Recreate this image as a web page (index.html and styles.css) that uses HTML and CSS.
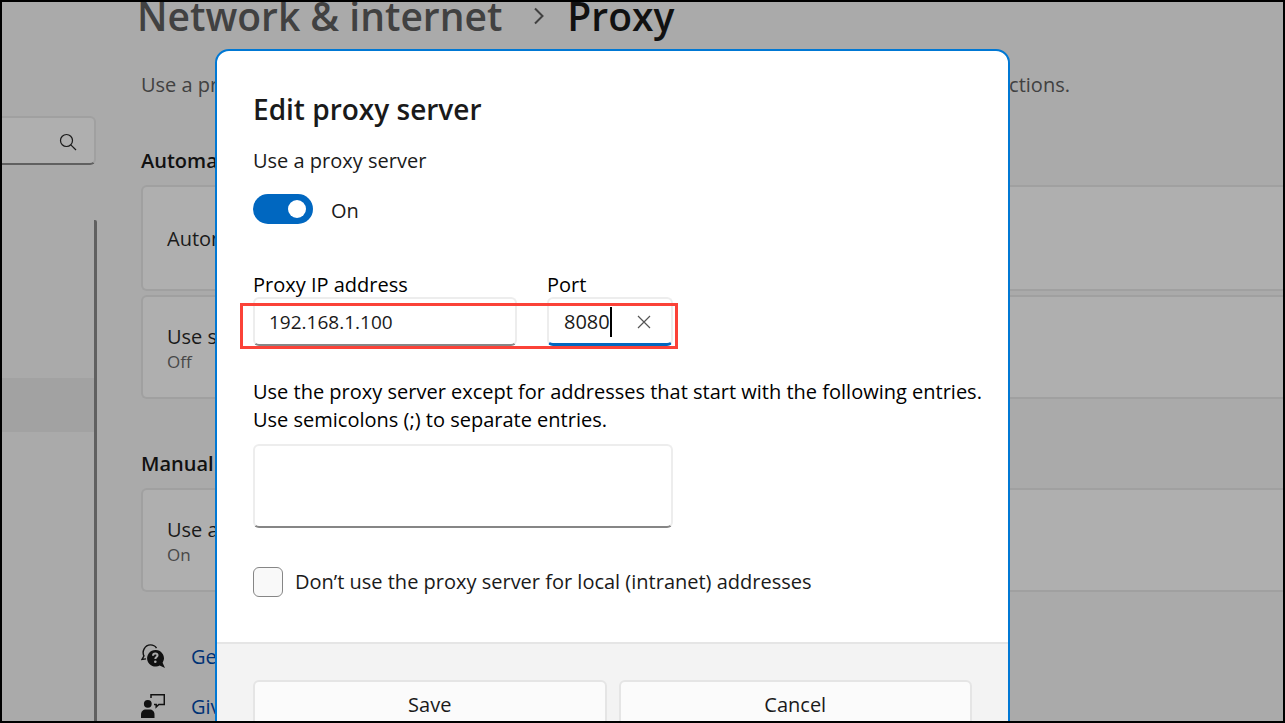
FILE: index.html
```html
<!DOCTYPE html>
<html lang="en">
<head>
<meta charset="utf-8">
<title>Network &amp; internet - Proxy</title>
<link rel="stylesheet" href="styles.css">
</head>
<body>
<div class="window">
  <aside class="sidebar">
    <label class="search">
      <input class="search-input" type="text" aria-label="Find a setting">
      <svg class="search-icon" viewBox="0 0 18 18" width="18" height="18" fill="none" stroke="#1a1a1a" stroke-width="1.2"><circle cx="7.500" cy="7.500" r="6"/><path d="M11.800 11.800 17 17"/></svg>
    </label>
    <nav class="nav" aria-label="Settings"><div class="nav-current"></div></nav>
  </aside>
  <main class="main">
    <h1 class="crumbs">
      <span class="crumb-parent">Network &amp; internet</span>
      <svg class="crumb-sep" viewBox="0 0 12 18" width="12" height="18" fill="none" stroke="#414141" stroke-width="2"><path d="M2 1.5 9.5 9 2 16.5"/></svg>
      <span>Proxy</span>
    </h1>
    <p class="intro">Use a proxy server for Ethernet or Wi-Fi connections. These settings don’t apply to VPN connections.</p>
    <h2 class="section-title">Automatic proxy setup</h2>
    <section class="card card-tall"><span>Automatically detect settings</span></section>
    <section class="card"><span>Use setup script</span><small class="state">Off</small></section>
    <h2 class="section-title section-next">Manual proxy setup</h2>
    <section class="card"><span>Use a proxy server</span><small class="state">On</small></section>
    <div class="links">
      <a class="help-link" href="#">
        <svg viewBox="0 0 24 24" width="24" height="24"><path d="M3.2 12.4C.4 7.8 3.8.9 9.4.9c3.300 0 5 1.300 6.100 3.200M3.200 11.500 1 15.500l4-.6" fill="none" stroke="#111" stroke-width="1.400"/><path d="M14.500 6a8.300 8.300 0 1 0 4.200 15.400L24 24l-2.400-5.200A8.300 8.300 0 0 0 14.500 6z" fill="#111"/><path d="M12 11.800c.1-3.300 4.900-2.800 4.500-.3-.2 1.500-2.200 1.500-2.200 3.500" fill="none" stroke="#aaa" stroke-width="2"/><circle cx="14.300" cy="17.800" r="1.300" fill="#aaa"/></svg>
        <span>Get help</span>
      </a>
      <a class="help-link" href="#">
        <svg viewBox="0 0 24 24" width="24" height="24"><path d="M10 4V.8h13.300v9.700h-5.500l-2.600 2.500v-2.500H13" fill="none" stroke="#111" stroke-width="1.500"/><circle cx="6.800" cy="9.800" r="3.900" fill="#111"/><path d="M0 24v-3.500c0-3 2-5 5-5h3.500c3 0 5 2 5 5V24z" fill="#111"/></svg>
        <span>Give feedback</span>
      </a>
    </div>
  </main>

  <div class="scrim">
    <form class="dialog" role="dialog" aria-labelledby="dialog-title">
      <div class="dialog-body">
        <h2 class="dialog-title" id="dialog-title">Edit proxy server</h2>
        <label class="switch-label" for="use-proxy">Use a proxy server</label>
        <div class="switch-row">
          <input class="switch" id="use-proxy" type="checkbox" role="switch" checked>
          <span class="switch-state">On</span>
        </div>
        <div class="fields">
          <div class="field field-address">
            <label for="address">Proxy IP address</label>
            <input class="box address" id="address" type="text" value="192.168.1.100">
          </div>
          <div class="field field-port">
            <label for="port">Port</label>
            <div class="box box-active">
              <input class="port-input" id="port" type="text" value="8080">
              <i class="caret"></i>
              <button class="clear" type="button" aria-label="Clear"><svg viewBox="0 0 14 14" width="14" height="14" stroke="#555" stroke-width="1.200"><path d="M1 1l12 12M13 1 1 13"/></svg></button>
            </div>
          </div>
          <div class="highlight"></div>
        </div>
        <label class="exceptions-label" for="exceptions">Use the proxy server except for addresses that start with the following entries. Use semicolons (;) to separate entries.</label>
        <textarea class="box exceptions" id="exceptions"></textarea>
        <label class="check-row"><input class="check" type="checkbox"><span>Don’t use the proxy server for local (intranet) addresses</span></label>
      </div>
      <div class="dialog-footer">
        <button class="action" type="button">Save</button>
        <button class="action" type="button">Cancel</button>
      </div>
    </form>
  </div>
</div>
</body>
</html>
```
FILE: styles.css
```css
* { box-sizing: border-box; }

body {
  margin: 0;
  font: 20px/28px "Open Sans", "Noto Sans", sans-serif;
  color: #1a1a1a;
}

h1, h2, p { margin: 0; }
input, textarea, button { font: inherit; color: inherit; margin: 0; }

.window {
  position: relative;
  display: flex;
  height: 100vh;
  border: 2px solid #000;
  background: #aaa;
  overflow: hidden;
}

/* Sidebar */
.sidebar {
  display: flex;
  flex-direction: column;
  flex: none;
  width: 95px;
  padding-top: 114px;
}
.search {
  display: flex;
  align-items: center;
  flex: none;
  height: 49px;
  margin-right: 1px;
  padding: 2px 17px 0 0;
  border: 2px solid #a0a0a0;
  border-left: 0;
  border-bottom-color: #606060;
  border-radius: 0 6px 6px 0;
  background: #afafaf;
}
.search-input {
  flex: 1;
  min-width: 0;
  border: 0;
  background: none;
}
.search-icon { flex: none; }
.nav {
  flex: 1;
  margin-top: 55px;
  padding-top: 158px;
  border-right: 3px solid #606060;
  border-top-right-radius: 2px;
}
.nav-current {
  height: 54px;
  background: #a2a2a2;
}

/* Page behind the dialog */
.main {
  flex: 1;
  min-width: 0;
  padding-left: 44px;
  white-space: nowrap;
}
.crumbs {
  display: flex;
  align-items: center;
  margin-left: -4px;
  height: 28px;
  font-size: 39px;
  font-weight: 600;
  line-height: 28px;
  color: #111;
}
.crumb-parent { color: #414141; }
.crumb-sep { margin: 0 22px 0 31px; }
.intro {
  margin-top: 41px;
  color: #414141;
}
.section-title {
  margin-top: 48px;
  margin-bottom: 10px;
  font-size: 20px;
  font-weight: 600;
  color: #111;
}
.section-next { margin-top: 51px; }
.card {
  display: flex;
  flex-direction: column;
  justify-content: center;
  height: 104px;
  padding-top: 2px;
  padding-left: 24px;
  border: 2px solid #a0a0a0;
  border-right: 0;
  border-radius: 6px 0 0 6px;
  background: #afafaf;
}
.card-tall {
  height: 106px;
  margin-bottom: 4px;
}
.state {
  font-size: 17px;
  line-height: 22px;
  color: #484848;
}
.links {
  display: flex;
  flex-direction: column;
  gap: 20px;
  margin-top: 49px;
}
.help-link {
  display: flex;
  align-items: center;
  gap: 26px;
  color: #003275;
  text-decoration: none;
}
.help-link span { padding-top: 2px; }

/* Dialog */
.scrim {
  position: absolute;
  inset: 0;
  padding: 47px 273px 0 213px;
}
.dialog {
  border: 2px solid #0078d4;
  border-radius: 14px;
  background: #fff;
  overflow: hidden;
}
.dialog-body { padding: 40px 16px 45px 36px; }
.dialog-title {
  font-size: 28px;
  font-weight: 600;
  line-height: 36px;
}
.switch-label {
  display: block;
  margin-top: 20px;
}
.switch-row {
  display: flex;
  align-items: center;
  gap: 18px;
  margin-top: 19px;
}
.switch {
  appearance: none;
  display: flex;
  align-items: center;
  justify-content: flex-end;
  width: 60px;
  height: 30px;
  padding: 0 7px;
  border-radius: 15px;
  background: #0067c0;
}
.switch::before {
  content: "";
  width: 18px;
  height: 18px;
  border-radius: 50%;
  background: #fff;
}
.switch-state {
  line-height: 26px;
  padding-top: 4px;
}
.fields {
  position: relative;
  display: flex;
  gap: 30px;
  width: 420px;
  max-width: 100%;
  margin-top: 47px;
  color: #000;
}
.field {
  display: flex;
  flex-direction: column;
}
.field label { height: 26px; }
.field-address { flex: 1; min-width: 0; }
.field-port { flex: none; width: 126px; }
.box {
  display: flex;
  align-items: center;
  width: 100%;
  height: 49px;
  padding: 1px 14px 0;
  border: 2px solid #ededed;
  border-bottom-color: #868686;
  border-radius: 6px;
  background: #fff;
  color: #1a1a1a;
  outline: 0;
}
.address { font-size: 19px; }
.box-active {
  padding: 1px 20px 0 15px;
  border-bottom: 3px solid #0067c0;
}
.port-input {
  width: 46px;
  padding: 1px 0 0;
  border: 0;
  background: none;
  outline: 0;
}
.caret {
  width: 2px;
  height: 30px;
  background: #000;
}
.clear {
  display: flex;
  margin-left: auto;
  padding: 0;
  border: 0;
  background: none;
}
.highlight {
  position: absolute;
  inset: 32px -5px -3px -13px;
  border: 3px solid #fb4238;
  pointer-events: none;
}
.exceptions-label {
  display: block;
  margin-top: 32px;
  color: #000;
}
.exceptions {
  display: block;
  width: 420px;
  max-width: 100%;
  height: 84px;
  margin-top: 10px;
  resize: none;
}
.check-row {
  display: flex;
  align-items: center;
  gap: 12px;
  margin-top: 39px;
}
.check {
  appearance: none;
  width: 30px;
  height: 30px;
  border: 1px solid #868686;
  border-radius: 6px;
  background: #f9f9f9;
}
.dialog-footer {
  display: flex;
  gap: 12px;
  padding: 36px;
  border-top: 2px solid #e5e5e5;
  background: #f3f3f3;
}
.action {
  flex: 1;
  height: 50px;
  padding: 0;
  border: 2px solid #e5e5e5;
  border-radius: 6px;
  background: #fbfbfb;
}
```
